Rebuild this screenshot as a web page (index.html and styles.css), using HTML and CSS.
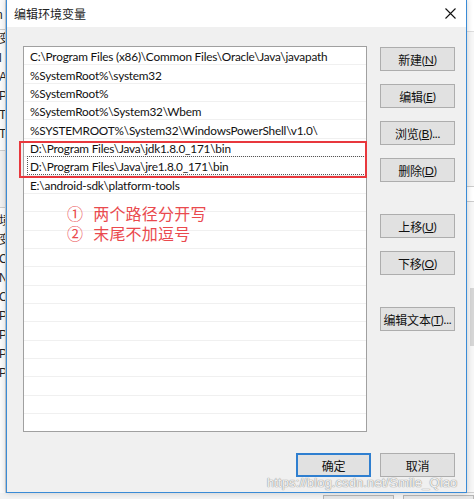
FILE: index.html
```html
<!DOCTYPE html>
<html lang="zh-CN">
<head>
<meta charset="utf-8">
<title>编辑环境变量</title>
<link rel="stylesheet" href="styles.css">
</head>
<body>
<div class="desk">
  <div class="bg-left">
    <div class="bg-top">n</div>
    <div class="bg-item">变</div>
    <div class="bg-item">l</div>
    <div class="bg-item">A</div>
    <div class="bg-item">Pa</div>
    <div class="bg-item">TE</div>
    <div class="bg-item">T</div>
    <div class="bg-gap"></div>
    <div class="bg-item">境</div>
    <div class="bg-item">变</div>
    <div class="bg-item">Co</div>
    <div class="bg-item">N</div>
    <div class="bg-item">O</div>
    <div class="bg-item">Pa</div>
    <div class="bg-item">PA</div>
    <div class="bg-item">PF</div>
    <div class="bg-item">PF</div>
  </div>
  <div class="bg-right">
    <div class="bgr-top"></div>
    <div class="bgr-mid"></div>
    <div class="bgr-lines"></div>
    <div class="bgr-scroll"></div>
    <div class="bgr-rest"></div>
  </div>
  <div class="bg-bottom">
    <span class="bg-btn"></span>
    <span class="bg-btn"></span>
  </div>

  <div class="dialog">
    <div class="titlebar">
      <span class="title">编辑环境变量</span>
      <svg class="close" width="11" height="11" viewBox="0 0 11 11"><path d="M0.5 0.5 L10.5 10.5 M10.5 0.5 L0.5 10.5" stroke="#111" stroke-width="1.1" fill="none"/></svg>
    </div>
    <div class="body">
      <div class="main">
        <div class="listwrap">
          <div class="list">
            <div class="row"><span class="item">C:\Program Files (x86)\Common Files\Oracle\Java\javapath</span></div>
            <div class="row"><span class="item">%SystemRoot%\system32</span></div>
            <div class="row"><span class="item">%SystemRoot%</span></div>
            <div class="row"><span class="item">%SystemRoot%\System32\Wbem</span></div>
            <div class="row"><span class="item">%SYSTEMROOT%\System32\WindowsPowerShell\v1.0\</span></div>
            <div class="row"><span class="item">D:\Program Files\Java\jdk1.8.0_171\bin</span></div>
            <div class="row"><span class="item focus">D:\Program Files\Java\jre1.8.0_171\bin</span></div>
            <div class="row"><span class="item">E:\android-sdk\platform-tools</span></div>
            <div class="row"></div><div class="row"></div><div class="row"></div>
            <div class="row"></div><div class="row"></div><div class="row"></div>
            <div class="row"></div><div class="row"></div><div class="row"></div>
            <div class="row"></div><div class="row"></div><div class="row"></div>
            <div class="row"></div>
          </div>
          <div class="redbox"></div>
          <div class="note">
            <div class="note-line"><span class="num">①</span><span class="txt">两个路径分开写</span></div>
            <div class="note-line"><span class="num">②</span><span class="txt">末尾不加逗号</span></div>
          </div>
        </div>
        <div class="side">
          <button class="btn">新建(<u>N</u>)</button>
          <button class="btn">编辑(<u>E</u>)</button>
          <button class="btn">浏览(<u>B</u>)...</button>
          <button class="btn">删除(<u>D</u>)</button>
          <button class="btn gap">上移(<u>U</u>)</button>
          <button class="btn">下移(<u>O</u>)</button>
          <button class="btn gap">编辑文本(<u>T</u>)...</button>
        </div>
      </div>
      <div class="footer">
        <button class="btn default">确定</button>
        <button class="btn">取消</button>
      </div>
    </div>
  </div>
  <div class="watermark">https://blog.csdn.net/Smile_Qiao</div>
</div>
</body>
</html>
```

FILE: styles.css
```css
* { box-sizing: border-box; }
html, body { margin: 0; padding: 0; }
body {
  width: 474px;
  height: 499px;
  overflow: hidden;
  background: #f3f3f3;
  font-family: "Liberation Sans", "Noto Sans CJK SC", sans-serif;
}
.desk {
  position: relative;
  width: 474px;
  height: 499px;
  overflow: hidden;
  display: grid;
  grid-template-columns: 6px 1fr 7px;
  grid-template-rows: 1fr 6px;
}

/* background window */
.bg-left {
  grid-column: 1;
  grid-row: 1;
  background: #fafafa;
  overflow: hidden;
  display: flex;
  flex-direction: column;
  font-size: 12px;
  color: #222;
  border-right: 1px solid #d0d0d0;
}
.bg-top { height: 30px; line-height: 30px; margin-left: -4px; border-bottom: 1px solid #ccc; }
.bg-item { height: 19px; line-height: 19px; margin-left: -1px; white-space: nowrap; }
.bg-gap { height: 58px; background: #f0f0f0; border-top: 1px solid #ccc; border-bottom: 1px solid #ccc; margin: 6px 0 4px; }

.bg-right {
  grid-column: 3;
  grid-row: 1;
  display: flex;
  flex-direction: column;
  background: #f7f7f7;
}
.bgr-top { height: 32px; background: #fff; border-bottom: 1px solid #ddd; }
.bgr-mid { height: 154px; }
.bgr-lines { height: 16px; border-top: 1px solid #ccc; border-bottom: 1px solid #ccc; background: #fff; }
.bgr-scroll { height: 58px; margin-top: 86px; margin-left: 3px; background: #d6d6d6; }
.bgr-rest { flex: 1; border-bottom: 1px solid #ccc; }

.bg-bottom {
  grid-column: 1 / 4;
  grid-row: 2;
  background: #f3f3f3;
  display: flex;
  padding: 2px 0 0 323px;
  gap: 9px;
}
.bg-btn { width: 75px; height: 10px; border: 1px solid #b5b5b5; background: #e6e6e6; }

/* dialog window */
.dialog {
  position: absolute;
  left: 6px;
  top: -1px;
  width: 461px;
  height: 494px;
  border: 1px solid #3a8bd6;
  background: #f0f0f0;
  box-shadow: 0 0 6px rgba(0,0,0,0.18);
  display: flex;
  flex-direction: column;
}
.titlebar {
  height: 27px;
  background: #fff;
  display: flex;
  align-items: center;
  justify-content: space-between;
  padding: 0 10px 1px 7px;
}
.title {
  font-family: "Noto Sans CJK SC", sans-serif;
  font-size: 12px;
  color: #222;
}
.close { display: block; margin-top: 1px; }

.body {
  flex: 1;
  display: flex;
  flex-direction: column;
  padding: 19px 11px 15px 16px;
}
.main { display: flex; }
.listwrap { position: relative; width: 344px; height: 386px; }
.list {
  width: 344px;
  height: 386px;
  border: 1px solid #a0a0a0;
  background: #fff;
  overflow: hidden;
}
.row {
  height: 18.37px;
  border-bottom: 1px solid #f0f0f0;
  display: flex;
  align-items: center;
  font-family: Lato, "Liberation Sans", sans-serif;
  font-size: 11.8px;
  letter-spacing: -0.2px;
  color: #111;
  white-space: nowrap;
}
.item {
  margin-left: 4px;
  padding: 2px 2px 0;
  line-height: 15px;
}
.item.focus {
  flex: 1;
  margin-right: 1px;
  outline: 1px dotted #555;
  outline-offset: 0;
}

.redbox {
  position: absolute;
  left: -4px;
  top: 95px;
  width: 348px;
  height: 37px;
  border: 2px solid #e8383d;
}
.note {
  position: absolute;
  left: 44px;
  top: 157px;
  font-family: "Noto Sans CJK SC", sans-serif;
  font-size: 16px;
  color: #ea4a4e;
  letter-spacing: 0.2px;
  white-space: nowrap;
  display: flex;
  flex-direction: column;
}
.note-line { height: 20px; display: flex; align-items: center; }
.num, .txt { display: block; line-height: 20px; }
.num { margin-right: 10px; }

.side {
  display: flex;
  flex-direction: column;
  margin-left: 13px;
  padding-top: 1px;
  gap: 13px;
}
.btn {
  width: 75px;
  height: 24px;
  padding: 0;
  border: 1px solid #adadad;
  background: #e1e1e1;
  font-family: Lato, "Noto Sans CJK SC", sans-serif;
  font-size: 12px;
  color: #111;
  display: flex;
  align-items: center;
  justify-content: center;
  white-space: nowrap;
  letter-spacing: -0.2px;
}
.btn u { text-underline-offset: 1px; }
.side .gap { margin-top: 19px; }

.footer {
  margin-top: 21px;
  display: flex;
  justify-content: flex-end;
  gap: 9px;
}
.btn.default { border: 2px solid #2f7fd0; }

.watermark {
  position: absolute;
  left: 267px;
  top: 475px;
  font-family: "Liberation Sans", sans-serif;
  font-size: 13px;
  letter-spacing: 0.1px;
  color: rgba(255,255,255,0.9);
  text-shadow: 0 0 1px #8a8a8a, 0 0 1px #8a8a8a;
  white-space: nowrap;
}
```
